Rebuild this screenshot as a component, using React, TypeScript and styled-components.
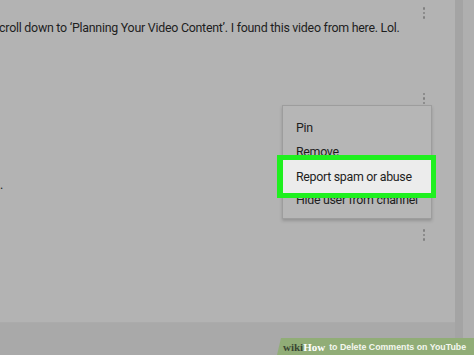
import React from "react";
import styled, { createGlobalStyle } from "styled-components";

const GlobalStyle = createGlobalStyle`
  html, body {
    margin: 0;
    padding: 0;
    background: #a9a9a9;
    font-family: Roboto, "Liberation Sans", Arial, sans-serif;
  }
`;

const Page = styled.div`
  position: relative;
  display: flex;
  width: 474px;
  height: 355px;
  overflow: hidden;
  background: #a9a9a9;
`;

const Main = styled.div`
  display: flex;
  flex-direction: column;
  width: 455px;
`;

const Panel = styled.div`
  position: relative;
  display: flex;
  flex-direction: column;
  height: 323px;
  background: #b3b3b3;
  border-bottom: 1px solid #ababab;
  box-sizing: border-box;
`;

const Stripe = styled.div<{ $tone: string; $width: number }>`
  width: ${(p) => p.$width}px;
  background: ${(p) => p.$tone};
`;

const Thread = styled.div<{ $height: number }>`
  display: flex;
  align-items: flex-start;
  justify-content: space-between;
  height: ${(p) => p.$height}px;
  padding-right: 30px;
`;

const CommentText = styled.p<{ $top: number; $shift: number }>`
  flex: 1;
  min-width: 0;
  margin: ${(p) => p.$top}px 0 0 ${(p) => p.$shift}px;
  font-size: 12.4px;
  letter-spacing: -0.25px;
  line-height: 16px;
  color: #1e1e1e;
  white-space: nowrap;
`;

const Kebab = styled.div`
  flex-shrink: 0;
  display: flex;
  flex-direction: column;
  gap: 2px;
  margin-top: 7px;
  span {
    width: 2.5px;
    height: 2.5px;
    border-radius: 50%;
    background: #808080;
  }
`;

const Menu = styled.div`
  position: absolute;
  left: 282px;
  top: 105px;
  width: 150px;
  height: 114px;
  box-sizing: border-box;
  padding-top: 10px;
  display: flex;
  flex-direction: column;
  background: #b6b6b6;
  border: 1px solid #9d9d9d;
  box-shadow: 0 2px 3px rgba(0, 0, 0, 0.18);
`;

const Item = styled.div<{ $highlight?: boolean }>`
  height: 24px;
  line-height: 24px;
  padding-left: 13px;
  font-size: 12.4px;
  letter-spacing: -0.3px;
  color: #1e1e1e;
  white-space: nowrap;
  ${(p) =>
    p.$highlight &&
    `
    position: relative;
    z-index: 1;
    height: 33px;
    line-height: 33px;
    margin: -9px -5px -10px -6px;
    border: 5px solid #1ff01f;
    border-left-width: 6px;
    background: #ececec;
  `}
`;

const Watermark = styled.div`
  position: absolute;
  right: 0;
  bottom: 0;
  width: 197px;
  height: 17px;
  padding-left: 6px;
  box-sizing: border-box;
  display: flex;
  align-items: center;
  gap: 4px;
  background: #91ad77;
  clip-path: polygon(4px 0, 100% 0, 100% 100%, 0 100%);
  font-family: "Liberation Sans", Arial, sans-serif;
  font-size: 8.8px;
  font-weight: bold;
  color: #f4f7ef;
  white-space: nowrap;
`;

const Brand = styled.span`
  font-family: "Liberation Serif", serif;
  font-size: 11px;
  b {
    color: #3b4733;
  }
  i {
    font-style: normal;
    font-weight: bold;
    color: #ffffff;
  }
`;

const Dots = () => (
  <Kebab>
    <span />
    <span />
    <span />
  </Kebab>
);

export default function App() {
  return (
    <>
      <GlobalStyle />
      <Page>
        <Main>
          <Panel>
            <Thread $height={86}>
              <CommentText $top={20} $shift={-8}>
                Scroll down to ‘Planning Your Video Content’. I found this video from here. Lol.
              </CommentText>
              <Dots />
            </Thread>
            <Thread $height={137}>
              <CommentText $top={91} $shift={0}>.</CommentText>
              <Dots />
            </Thread>
            <Thread $height={100}>
              <span />
              <Dots />
            </Thread>
            <Menu>
              <Item>Pin</Item>
              <Item>Remove</Item>
              <Item $highlight>Report spam or abuse</Item>
              <Item>Hide user from channel</Item>
            </Menu>
          </Panel>
        </Main>
        <Stripe $tone="#a4a4a4" $width={8} />
        <Stripe $tone="#afafaf" $width={11} />
        <Watermark>
          <Brand>
            <b>wiki</b>
            <i>How</i>
          </Brand>
          <span>to Delete Comments on YouTube</span>
        </Watermark>
      </Page>
    </>
  );
}
